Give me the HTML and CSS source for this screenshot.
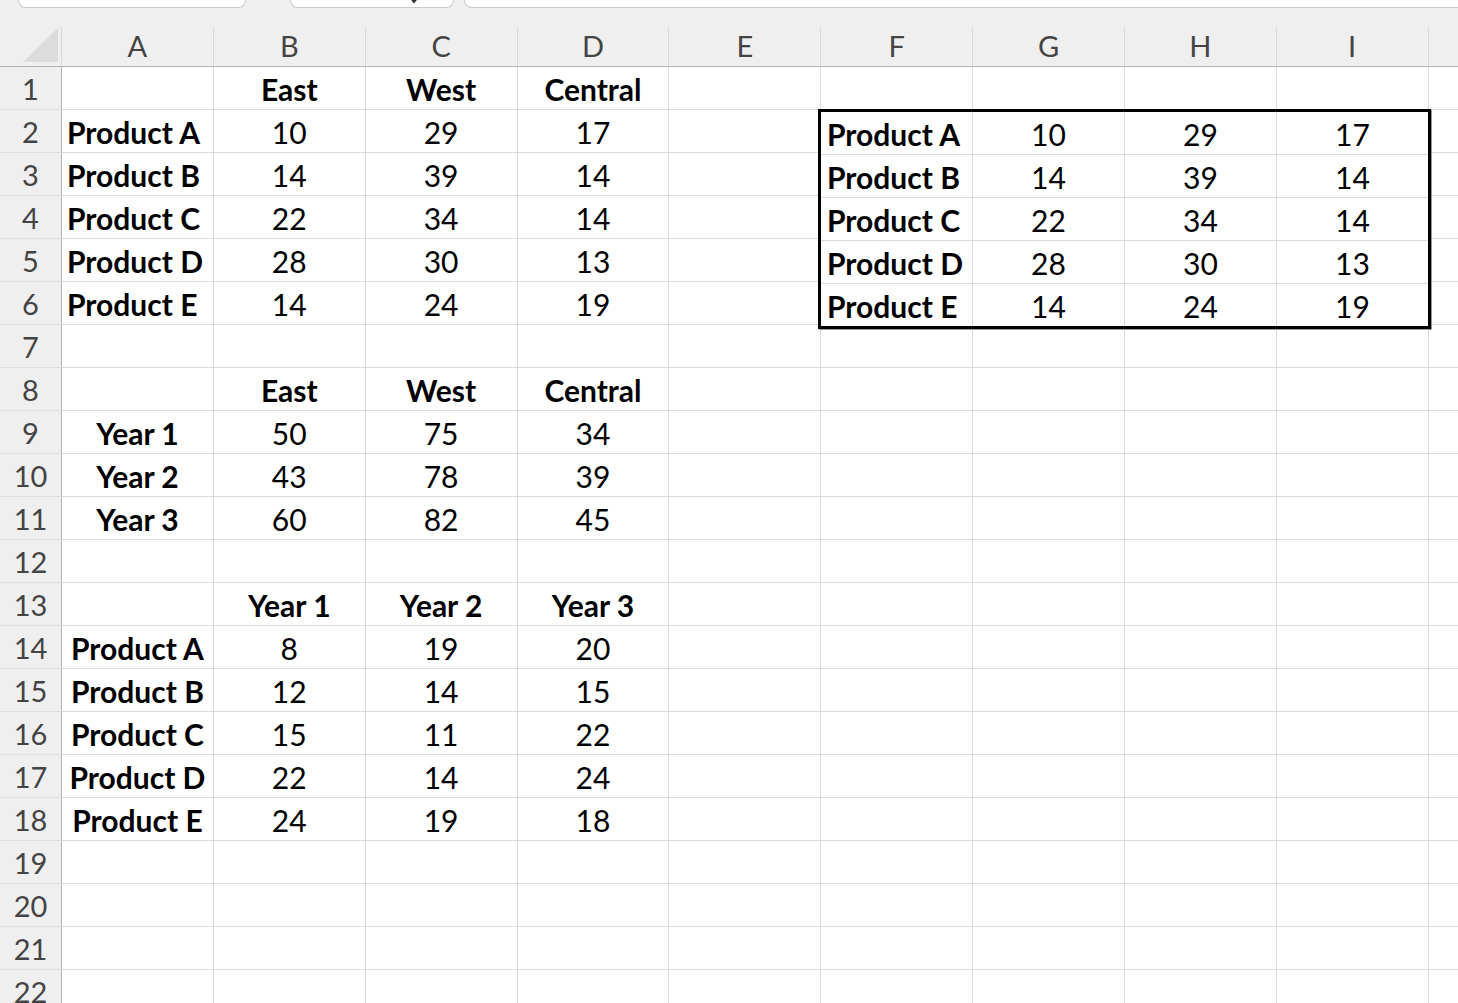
FILE: index.html
```html
<!DOCTYPE html>
<html lang="en">
<head>
  <meta charset="UTF-8" />
  <meta name="viewport" content="width=device-width, initial-scale=1.0"/>
  <title>Sales by Region</title>
  <link rel="stylesheet" href="styles.css">
</head>
<body>
  <!-- bottom edge of the name box / formula bar -->
  <div class="strip">
    <div class="field field-name"></div>
    <div class="field field-mid">
      <svg class="chevron" width="10" height="6" viewBox="0 0 10 6"><path d="M1 -2 L5 3 L9 -2" fill="none" stroke="#333" stroke-width="2"/></svg>
    </div>
    <div class="field field-formula"></div>
  </div>

  <div class="sheet">
    <div class="sheet-gap"></div>
    <table class="grid">
      <colgroup>
        <col class="c-head">
        <col class="c"><col class="c"><col class="c"><col class="c"><col class="c">
        <col class="c"><col class="c"><col class="c"><col class="c"><col class="c">
      </colgroup>
      <tr class="head-row">
        <th class="corner">
          <svg width="62" height="39" viewBox="0 0 62 39"><polygon points="23,35 58,35 58,1" fill="#dcdcdc"/></svg>
        </th>
        <th class="col">A</th><th class="col">B</th><th class="col">C</th><th class="col">D</th><th class="col">E</th>
        <th class="col">F</th><th class="col">G</th><th class="col">H</th><th class="col">I</th><th class="col"></th>
      </tr>
      <tr><th class="row">1</th><td></td><td class="b">East</td><td class="b">West</td><td class="b">Central</td><td></td><td></td><td></td><td></td><td></td><td></td></tr>
      <tr><th class="row">2</th><td class="lb">Product A</td><td>10</td><td>29</td><td>17</td><td></td><td></td><td></td><td></td><td></td><td></td></tr>
      <tr><th class="row">3</th><td class="lb">Product B</td><td>14</td><td>39</td><td>14</td><td></td><td></td><td></td><td></td><td></td><td></td></tr>
      <tr><th class="row">4</th><td class="lb">Product C</td><td>22</td><td>34</td><td>14</td><td></td><td></td><td></td><td></td><td></td><td></td></tr>
      <tr><th class="row">5</th><td class="lb">Product D</td><td>28</td><td>30</td><td>13</td><td></td><td></td><td></td><td></td><td></td><td></td></tr>
      <tr><th class="row">6</th><td class="lb">Product E</td><td>14</td><td>24</td><td>19</td><td></td><td></td><td></td><td></td><td></td><td></td></tr>
      <tr><th class="row">7</th><td></td><td></td><td></td><td></td><td></td><td></td><td></td><td></td><td></td><td></td></tr>
      <tr><th class="row">8</th><td></td><td class="b">East</td><td class="b">West</td><td class="b">Central</td><td></td><td></td><td></td><td></td><td></td><td></td></tr>
      <tr><th class="row">9</th><td class="b">Year 1</td><td>50</td><td>75</td><td>34</td><td></td><td></td><td></td><td></td><td></td><td></td></tr>
      <tr><th class="row">10</th><td class="b">Year 2</td><td>43</td><td>78</td><td>39</td><td></td><td></td><td></td><td></td><td></td><td></td></tr>
      <tr><th class="row">11</th><td class="b">Year 3</td><td>60</td><td>82</td><td>45</td><td></td><td></td><td></td><td></td><td></td><td></td></tr>
      <tr><th class="row">12</th><td></td><td></td><td></td><td></td><td></td><td></td><td></td><td></td><td></td><td></td></tr>
      <tr><th class="row">13</th><td></td><td class="b">Year 1</td><td class="b">Year 2</td><td class="b">Year 3</td><td></td><td></td><td></td><td></td><td></td><td></td></tr>
      <tr><th class="row">14</th><td class="b">Product A</td><td>8</td><td>19</td><td>20</td><td></td><td></td><td></td><td></td><td></td><td></td></tr>
      <tr><th class="row">15</th><td class="b">Product B</td><td>12</td><td>14</td><td>15</td><td></td><td></td><td></td><td></td><td></td><td></td></tr>
      <tr><th class="row">16</th><td class="b">Product C</td><td>15</td><td>11</td><td>22</td><td></td><td></td><td></td><td></td><td></td><td></td></tr>
      <tr><th class="row">17</th><td class="b">Product D</td><td>22</td><td>14</td><td>24</td><td></td><td></td><td></td><td></td><td></td><td></td></tr>
      <tr><th class="row">18</th><td class="b">Product E</td><td>24</td><td>19</td><td>18</td><td></td><td></td><td></td><td></td><td></td><td></td></tr>
      <tr><th class="row">19</th><td></td><td></td><td></td><td></td><td></td><td></td><td></td><td></td><td></td><td></td></tr>
      <tr><th class="row">20</th><td></td><td></td><td></td><td></td><td></td><td></td><td></td><td></td><td></td><td></td></tr>
      <tr><th class="row">21</th><td></td><td></td><td></td><td></td><td></td><td></td><td></td><td></td><td></td><td></td></tr>
      <tr><th class="row">22</th><td></td><td></td><td></td><td></td><td></td><td></td><td></td><td></td><td></td><td></td></tr>
    </table>

    <!-- linked picture of the first table, floating over F2:I6 -->
    <div class="picture">
      <div class="pc lb">Product A</div><div class="pc">10</div><div class="pc">29</div><div class="pc">17</div>
      <div class="pc lb">Product B</div><div class="pc">14</div><div class="pc">39</div><div class="pc">14</div>
      <div class="pc lb">Product C</div><div class="pc">22</div><div class="pc">34</div><div class="pc">14</div>
      <div class="pc lb">Product D</div><div class="pc">28</div><div class="pc">30</div><div class="pc">13</div>
      <div class="pc lb">Product E</div><div class="pc">14</div><div class="pc">24</div><div class="pc">19</div>
    </div>
  </div>
</body>
</html>
```

FILE: styles.css
```css
body {
  margin: 0;
  background: #efefef;
  font-family: Lato, "Open Sans", sans-serif;
  overflow: hidden;
  height: 1003px;
}

/* top edge of the toolbar fields */
.strip {
  display: flex;
  height: 8px;
}
.field {
  box-sizing: border-box;
  height: 8px;
  background: #fff;
  border: 1px solid #c9c9c9;
  border-top: none;
  border-radius: 0 0 8px 8px;
}
.field-name {
  margin-left: 18px;
  width: 228px;
}
.field-mid {
  position: relative;
  margin-left: 44px;
  width: 164px;
}
.chevron {
  position: absolute;
  left: 118px;
  top: -1px;
}
.field-formula {
  margin-left: 10px;
  flex: 1;
  border-right: none;
  border-radius: 0 0 0 8px;
}

.sheet {
  position: relative;
}
.sheet-gap {
  height: 19px;
}

.grid {
  border-collapse: separate;
  border-spacing: 0;
  table-layout: fixed;
  width: 1580.5px;
  background: #fff;
}
.c-head {
  width: 62px;
}
.c {
  width: 151.85px;
}
.grid th,
.grid td {
  box-sizing: border-box;
  padding: 0;
  vertical-align: top;
  white-space: nowrap;
  overflow: hidden;
}

.grid tr {
  height: 43px;
}
.grid .head-row {
  height: 40px;
}
.corner {
  background: #efefef;
  border-right: 1px solid #d6d6d6;
  border-bottom: 1px solid #b1b1b1;
}
.corner svg {
  display: block;
}
.grid .col {
  background: #efefef;
  border-right: 1px solid #d8d8d8;
  border-bottom: 1px solid #b1b1b1;
  color: #444;
  font-size: 29px;
  font-weight: normal;
  line-height: 36px;
  padding-top: 1px;
  text-align: center;
}

.grid .row {
  background: #efefef;
  border-right: 1px solid #b4b4b4;
  border-bottom: 1px solid #e0e0e0;
  color: #444;
  font-size: 29px;
  font-weight: normal;
  line-height: 36px;
  padding-top: 4px;
  text-align: center;
}
.grid td {
  border-right: 1px solid #dadada;
  border-bottom: 1px solid #dadada;
  font-size: 30px;
  line-height: 36px;
  padding: 4px 5px 0;
  text-align: center;
  color: #000;
}
.grid td.b {
  font-weight: bold;
}
.grid td.lb {
  font-weight: bold;
  text-align: left;
}

/* pasted picture of the product table */
.picture {
  position: absolute;
  left: 818px;
  top: 101px;
  display: grid;
  grid-template-columns: repeat(4, 151px);
  grid-auto-rows: 42px;
  gap: 1px;
  background: #dadada;
  border: 3px solid #000;
  box-shadow: 1px 1px 0 #9a9a9a;
}
.pc {
  background: #fff;
  font-size: 30px;
  line-height: 36px;
  padding: 4px 6px 0;
  text-align: center;
  white-space: nowrap;
}
.pc.lb {
  font-weight: bold;
  text-align: left;
}
```
